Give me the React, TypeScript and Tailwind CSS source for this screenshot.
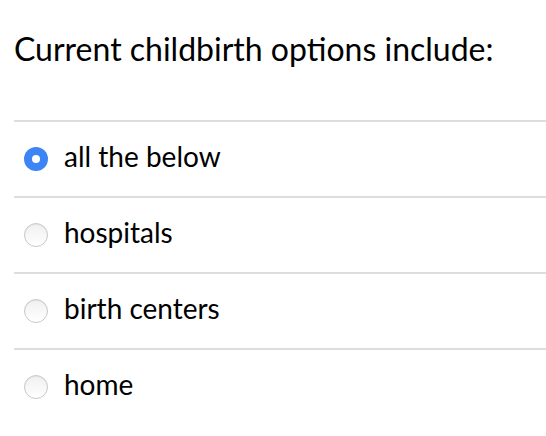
const options = ['all the below', 'hospitals', 'birth centers', 'home']

function Radio({ checked }: { checked: boolean }) {
  if (checked) {
    return (
      <span className="flex h-[24px] w-[24px] shrink-0 items-center justify-center rounded-full bg-[#3d85f5]">
        <span className="h-[8px] w-[8px] rounded-full bg-white" />
      </span>
    )
  }
  return (
    <span className="h-[24px] w-[24px] shrink-0 rounded-full border border-[#c8c8c8] bg-gradient-to-b from-[#f0f0f0] to-white shadow-[inset_0_1px_1px_rgba(0,0,0,0.06)]" />
  )
}

export default function App() {
  return (
    <div className="h-[436px] w-[546px] bg-white pl-[14px] text-black" style={{ fontFamily: 'Lato, "Open Sans", sans-serif' }}>
      <h1 className="pt-[29px] pb-[51px] text-[32px] leading-[40px]">Current childbirth options include:</h1>
      <div>
        {options.map((option, i) => (
          <label key={option} className="flex h-[76px] items-center gap-[16px] border-t-2 border-[#dddddd] pl-[10px]">
            <Radio checked={i === 0} />
            <span className="pb-[6px] text-[28px] leading-none">{option}</span>
          </label>
        ))}
      </div>
    </div>
  )
}
